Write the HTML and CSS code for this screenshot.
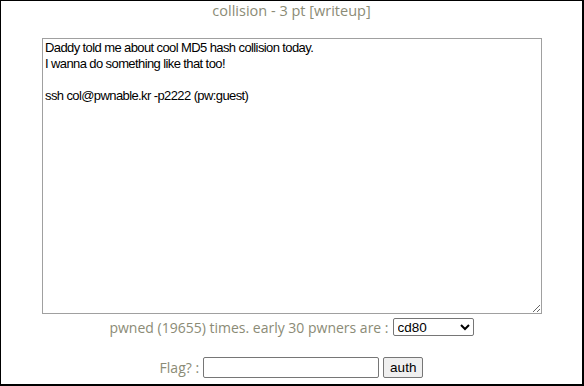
FILE: index.html
```html
<!DOCTYPE html>
<html lang="en">
<head>
    <meta charset="UTF-8">
    <title>collision</title>
    <link rel="stylesheet" href="styles.css">
</head>
<body>
    <div class="frame">
        <div class="title">collision - 3 pt [<a href="#">writeup</a>]</div>
        <textarea class="desc" readonly>Daddy told me about cool MD5 hash collision today.
I wanna do something like that too!

ssh col@pwnable.kr -p2222 (pw:guest)</textarea>
        <div class="row pwners">
            pwned (19655) times. early 30 pwners are :
            <select class="pwner-list">
                <option>cd80</option>
            </select>
        </div>
        <form class="row flag-form" onsubmit="return false">
            Flag? :
            <input type="text" class="flag-input">
            <button type="submit" class="auth-btn">auth</button>
        </form>
    </div>
</body>
</html>
```

FILE: styles.css
```css
* {
    box-sizing: border-box;
}

body {
    margin: 0;
    background: #fff;
}

.frame {
    width: 584px;
    height: 386px;
    border-top: 1px solid #000;
    border-left: 1px solid #000;
    border-right: 2px solid #000;
    border-bottom: 2px solid #000;
    display: flex;
    flex-direction: column;
    align-items: center;
    font-family: "Open Sans", sans-serif;
    font-size: 14px;
    color: #8b8b76;
}

.title {
    margin-top: 1px;
    line-height: 18px;
    font-size: 14.5px;
}

.title a {
    color: inherit;
    text-decoration: none;
}

.desc {
    margin-top: 18px;
    margin-left: 1px;
    width: 500px;
    height: 276px;
    padding: 1px 2px;
    border: 1px solid #a0a0a0;
    font-family: "Liberation Sans", Arial, sans-serif;
    font-size: 13px;
    letter-spacing: -0.6px;
    line-height: 16px;
    color: #000;
    resize: vertical;
}

.row {
    display: flex;
    align-items: center;
    gap: 4px;
    height: 18px;
}

.pwners {
    margin-top: 4px;
}

.pwner-list {
    width: 81px;
    height: 18px;
    font-family: "Liberation Sans", Arial, sans-serif;
    font-size: 13.5px;
    border: 1px solid #767676;
    border-radius: 2px;
    background: #fff;
    color: #000;
}

.flag-form {
    margin: 21px 0 0;
    height: 21px;
}

.flag-input {
    width: 176px;
    height: 21px;
    border: 1px solid #767676;
    border-radius: 2px;
}

.auth-btn {
    height: 21px;
    padding: 0 6px;
    font-family: "Liberation Sans", Arial, sans-serif;
    font-size: 13.5px;
    color: #000;
    background: #efefef;
    border: 1px solid #767676;
    border-radius: 2px;
}
```
